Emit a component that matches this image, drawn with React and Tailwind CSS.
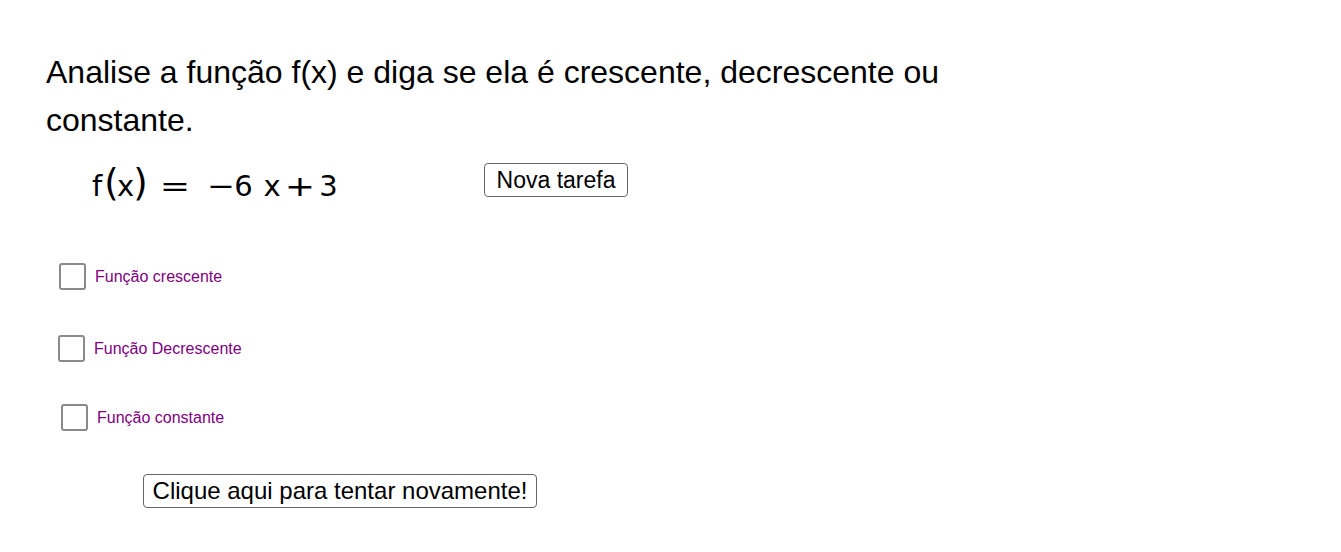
const options = [
  { label: "Função crescente", row: "mt-[66px] pl-[59px]" },
  { label: "Função Decrescente", row: "mt-[45px] pl-[58px]" },
  { label: "Função constante", row: "mt-[42px] pl-[61px]" },
];

function Checkbox() {
  return <span className="block h-[27px] w-[27px] shrink-0 rounded-[3px] border-2 border-[#8a8a8a] bg-white" />;
}

// glyph cells are zero-width and centred, so ml-* is the distance between glyph centres
function Formula() {
  return (
    <div className="flex w-[484px] shrink-0 items-baseline pl-[97px] mt-[2px] leading-none text-[29px] text-black [font-family:'DejaVu_Sans',sans-serif]">
      <span className="flex w-0 justify-center">f</span>
      <span className="flex w-0 justify-center ml-[14.5px] text-[37px]">(</span>
      <span className="flex w-0 justify-center ml-[14px]">x</span>
      <span className="flex w-0 justify-center ml-[15px] text-[37px]">)</span>
      <span className="flex w-0 justify-center ml-[34.5px] scale-x-[1.25]">=</span>
      <span className="flex w-0 justify-center ml-[46px] scale-x-[1.15]">−</span>
      <span className="flex w-0 justify-center ml-[22.5px]">6</span>
      <span className="flex w-0 justify-center ml-[28.5px]">x</span>
      <span className="flex w-0 justify-center ml-[27.5px] scale-x-[1.25]">+</span>
      <span className="flex w-0 justify-center ml-[29px]">3</span>
    </div>
  );
}

export default function App() {
  return (
    <div className="h-[552px] w-full overflow-hidden bg-white text-black [font-family:'Liberation_Sans',Arial,sans-serif]">
      <h1 className="pl-[46px] pt-[48px] text-[32px] font-normal leading-[48px] whitespace-nowrap">
        Analise a função f(x) e diga se ela é crescente, decrescente ou
        <br />
        constante.
      </h1>

      <div className="mt-[19px] flex h-[34px] items-start">
        <Formula />
        <button className="flex h-[34px] w-[144px] items-center justify-center rounded-[4px] border border-[#666] bg-white text-[23px] leading-none">
          Nova tarefa
        </button>
      </div>

      <div className="flex flex-col">
        {options.map((o) => (
          <label key={o.label} className={`flex items-center ${o.row}`}>
            <Checkbox />
            <span className="ml-[9px] text-[16px] leading-none text-[#800080]">{o.label}</span>
          </label>
        ))}
      </div>

      <div className="mt-[43px] pl-[143px]">
        <button className="flex h-[34px] w-[394px] items-center justify-center rounded-[4px] border border-[#666] bg-white text-[24px] leading-none">
          Clique aqui para tentar novamente!
        </button>
      </div>
    </div>
  );
}
